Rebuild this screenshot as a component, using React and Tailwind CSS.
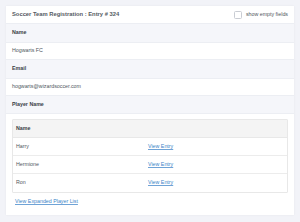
export default function App() {
  const players = ["Harry", "Hermione", "Ron"];
  const font = { fontFamily: '"Liberation Sans", Arial, sans-serif' };

  return (
    <div className="w-[300px] h-[222px] bg-[#f2f3f8] pt-[6px] px-[6px]" style={font}>
      <div className="bg-white shadow-[0_0_2px_rgba(0,0,0,0.06)] text-[5.3px] leading-none">
        {/* Header */}
        <div className="h-[18px] flex items-center justify-between pl-[6px] pr-[6px] border-b border-[#eceef3]">
          <span className="font-bold text-[#555a62] text-[5.8px]">Soccer Team Registration : Entry # 324</span>
          <label className="flex items-center gap-[4px] text-[#50575e] text-[5.3px]">
            <span className="w-[8px] h-[8px] border border-[#c9ccd3] rounded-[1.5px] bg-white"></span>
            show empty fields
          </label>
        </div>

        <div className="h-[19px] flex items-center pl-[6px] bg-[#f5f6fa] border-b border-[#eceef3] font-bold text-[#3a3f47]">Name</div>
        <div className="h-[17px] flex items-center pl-[6px] text-[#50575e] border-b border-[#eceef3]">Hogwarts FC</div>
        <div className="h-[19px] flex items-center pl-[6px] bg-[#f5f6fa] border-b border-[#eceef3] font-bold text-[#3a3f47]">Email</div>
        <div className="h-[17px] flex items-center pl-[6px] text-[#50575e] border-b border-[#eceef3]">hogwarts@wizardsoccer.com</div>
        <div className="h-[18px] flex items-center pl-[6px] bg-[#f5f6fa] border-b border-[#eceef3] font-bold text-[#3a3f47]">Player Name</div>

        {/* Nested list */}
        <div className="px-[6px] pt-[5px] pb-[5px]">
          <div className="border border-[#e8e8e8] rounded-[1px]">
            <div className="h-[18px] flex items-center pl-[3px] bg-[#f4f4f4] border-b border-[#e8e8e8] font-bold text-[#3a3f47]">Name</div>
            {players.map((p, i) => (
              <div
                key={p}
                className={`h-[18px] grid grid-cols-[132px_1fr] items-center pl-[3px] text-[#50575e] ${i < players.length - 1 ? "border-b border-[#ececec]" : ""}`}
              >
                <span>{p}</span>
                <a href="#" className="text-[#3a84c8] underline decoration-[#6fa3d6]">View Entry</a>
              </div>
            ))}
          </div>
          <div className="h-[17px] flex items-center pl-[3px]">
            <a href="#" className="text-[#3a84c8] underline decoration-[#6fa3d6]">View Expanded Player List</a>
          </div>
        </div>
      </div>
    </div>
  );
}
